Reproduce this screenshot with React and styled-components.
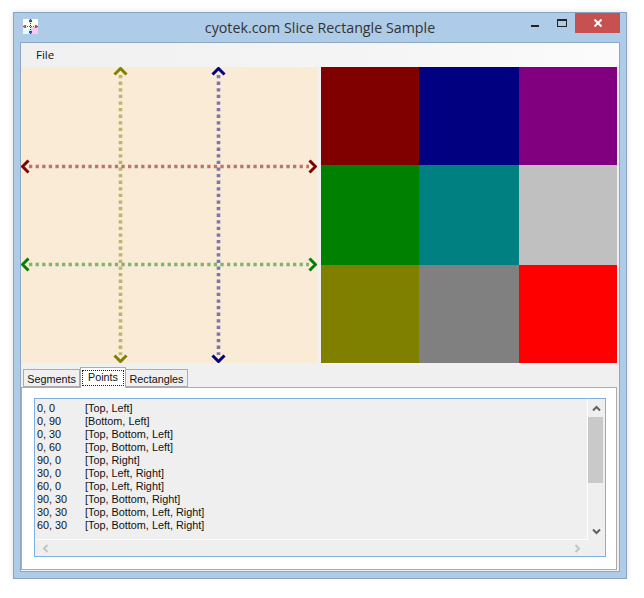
import React from 'react';
import styled, { createGlobalStyle } from 'styled-components';

const GlobalStyle = createGlobalStyle`
  html, body { margin: 0; padding: 0; background: #fff; }
  body { font-family: 'Open Sans', 'Liberation Sans', sans-serif; }
`;

const Window = styled.div`
  box-sizing: border-box;
  width: 614px;
  height: 567px;
  margin: 12px 0 0 13px;
  background: #aecbe8;
  border: 1px solid #8aa5c2;
  box-shadow: 0 0 6px rgba(0, 0, 0, 0.12);
  display: flex;
  flex-direction: column;
`;

const Caption = styled.div`
  height: 29px;
  padding: 0 6px;
  display: grid;
  grid-template-columns: 1fr auto 1fr;
  align-items: start;
`;

const AppIcon = styled.svg`
  display: block;
  width: 15px;
  height: 15px;
  margin: 6px 0 0 3px;
`;

const Title = styled.div`
  font-size: 14.25px;
  line-height: 29px;
  color: #333;
`;

const Controls = styled.div`
  display: flex;
  justify-content: flex-end;
`;

const ControlButton = styled.div`
  width: ${(props) => props.$width}px;
  height: 20px;
  display: flex;
  align-items: center;
  justify-content: center;
  background: ${(props) => props.$bg || 'transparent'};
`;

const Client = styled.div`
  flex: 1;
  margin: 0 6px 6px;
  background: #f0f0f0;
  border: 1px solid #8ca8c6;
  display: flex;
  flex-direction: column;
`;

const MenuBar = styled.div`
  box-sizing: border-box;
  height: 24px;
  padding: 0 0 2px 15px;
  display: flex;
  align-items: center;
  font-size: 11.5px;
  color: #111;
  background: linear-gradient(90deg, #f0f0f0 0%, #f5f5f5 60%, #fbfbfb 100%);
`;

const Stage = styled.div`
  display: flex;
  gap: 4px;
  height: 296px;
`;

const Canvas = styled.svg`
  display: block;
  width: 296px;
  height: 296px;
  background: #faebd7;
`;

const ColorGrid = styled.div`
  width: 296px;
  display: grid;
  grid-template-columns: 98px 100px 98px;
  grid-template-rows: 98px 100px 98px;
`;

const Cell = styled.div`
  background: ${(props) => props.$color};
`;

const TabStrip = styled.div`
  height: 20px;
  margin-top: 4px;
  padding-left: 2px;
  display: flex;
  align-items: flex-end;
  font-family: 'Liberation Sans', Arial, sans-serif;
`;

const Tab = styled.div`
  box-sizing: border-box;
  height: ${(props) => (props.$active ? 21 : 18)}px;
  width: ${(props) => props.$width}px;
  margin-bottom: ${(props) => (props.$active ? -1 : 0)}px;
  position: relative;
  z-index: ${(props) => (props.$active ? 1 : 0)};
  border: 1px solid #acacac;
  border-bottom: ${(props) => (props.$active ? 'none' : '1px solid #acacac')};
  border-left-width: ${(props) => (props.$first || props.$active ? 1 : 0)}px;
  background: ${(props) => (props.$active ? '#fff' : '#f0f0f0')};
  color: #111;
  font-size: 10.8px;
  display: flex;
  align-items: ${(props) => (props.$active ? 'flex-start' : 'center')};
  justify-content: center;
  padding-top: ${(props) => (props.$active ? 2 : 1)}px;
`;

const FocusLabel = styled.span`
  display: block;
  box-sizing: border-box;
  width: 100%;
  margin: 0 1px;
  height: 16px;
  line-height: 14px;
  text-align: center;
  outline: 1px dotted #222;
  outline-offset: -1px;
`;

const TabPanel = styled.div`
  box-sizing: border-box;
  width: 596px;
  height: 183px;
  padding: 10px 10px 12px 12px;
  background: #fff;
  border: 1px solid #acacac;
`;

const ListFrame = styled.div`
  box-sizing: border-box;
  height: 159px;
  border: 1px solid #7fb0e2;
  background: #efefef;
  display: grid;
  grid-template-columns: 1fr 17px;
  grid-template-rows: 1fr 16px;
`;

const ListBody = styled.div`
  padding: 3px 0 0 2px;
  border-right: 1px solid #fff;
  border-bottom: 1px solid #fff;
  font-family: 'Liberation Sans', Arial, sans-serif;
  font-size: 10.85px;
  line-height: 13px;
  color: #111;
`;

const ListRow = styled.div`
  display: flex;
`;

const Coord = styled.span`
  width: 48px;
`;

const VScroll = styled.div`
  display: grid;
  grid-template-rows: 18px 66px 1fr 18px;
  justify-items: center;
  align-items: center;
`;

const Thumb = styled.div`
  width: 15px;
  height: 66px;
  background: #c9c9c9;
  justify-self: start;
`;

const HScroll = styled.div`
  grid-column: 1 / 3;
  display: flex;
  align-items: center;
  justify-content: space-between;
  padding: 0 24px 0 7px;
`;

const Arrow = styled.svg`
  display: block;
  width: ${(props) => props.$w}px;
  height: ${(props) => props.$h}px;
`;

const rows = [
  ['0, 0', '[Top, Left]'],
  ['0, 90', '[Bottom, Left]'],
  ['0, 30', '[Top, Bottom, Left]'],
  ['0, 60', '[Top, Bottom, Left]'],
  ['90, 0', '[Top, Right]'],
  ['30, 0', '[Top, Left, Right]'],
  ['60, 0', '[Top, Left, Right]'],
  ['90, 30', '[Top, Bottom, Right]'],
  ['30, 30', '[Top, Bottom, Left, Right]'],
  ['60, 30', '[Top, Bottom, Left, Right]'],
];

const colors = ['#800000', '#000080', '#800080', '#008000', '#008080', '#c0c0c0', '#808000', '#808080', '#ff0000'];

const VGuide = ({ x, color }) => (
  <g fill="none" stroke={color} strokeWidth="3">
    <line x1={x} y1="8" x2={x} y2="288" strokeWidth="3.6" strokeDasharray="3.3 3.3" opacity="0.5" />
    <polyline points={`${x - 6},7.5 ${x},1.5 ${x + 6},7.5`} />
    <polyline points={`${x - 6},288.5 ${x},294.5 ${x + 6},288.5`} />
  </g>
);

const HGuide = ({ y, color }) => (
  <g fill="none" stroke={color} strokeWidth="3">
    <line x1="8" y1={y} x2="288" y2={y} strokeWidth="3.6" strokeDasharray="3.3 3.3" opacity="0.5" />
    <polyline points={`7.5,${y - 6} 1.5,${y} 7.5,${y + 6}`} />
    <polyline points={`288.5,${y - 6} 294.5,${y} 288.5,${y + 6}`} />
  </g>
);

const App = () => (
  <>
    <GlobalStyle />
    <Window>
      <Caption>
        <AppIcon viewBox="0 0 15 15">
          <rect width="15" height="15" fill="#fffff0" />
          <rect y="8" width="8" height="7" fill="#e0ffff" />
          <rect x="8" y="8" width="7" height="7" fill="#fbc8f0" />
          <line x1="7.5" y1="0" x2="7.5" y2="15" stroke="#2020e0" strokeDasharray="1 1" />
          <line x1="0" y1="7.5" x2="15" y2="7.5" stroke="#e02040" strokeDasharray="1 1" />
          <path d="M6 1l3 2M9 1l-3 2M6 12l3 2M9 12l-3 2" stroke="#2020e0" />
          <path d="M1 6l2 3M3 6l-2 3M12 6l2 3M14 6l-2 3" stroke="#e02040" />
        </AppIcon>
        <Title>cyotek.com Slice Rectangle Sample</Title>
        <Controls>
          <ControlButton $width={27}>
            <svg width="9" height="20" viewBox="0 0 9 20">
              <rect y="12" width="8" height="2" fill="#222" />
            </svg>
          </ControlButton>
          <ControlButton $width={26}>
            <svg width="10" height="20" viewBox="0 0 10 20">
              <rect x="0.5" y="6.5" width="9" height="7" fill="none" stroke="#222" />
              <rect y="6" width="10" height="2" fill="#222" />
            </svg>
          </ControlButton>
          <ControlButton $width={45} $bg="#c75050">
            <svg width="8" height="8" viewBox="0 0 8 8">
              <path d="M0.5 0.5L7.5 7.5M7.5 0.5L0.5 7.5" stroke="#fff" strokeWidth="2" />
            </svg>
          </ControlButton>
        </Controls>
      </Caption>
      <Client>
        <MenuBar>File</MenuBar>
        <Stage>
          <Canvas viewBox="0 0 296 296">
            <VGuide x={99.5} color="#808000" />
            <VGuide x={197.5} color="#000080" />
            <HGuide y={99.5} color="#800000" />
            <HGuide y={197.5} color="#008000" />
          </Canvas>
          <ColorGrid>
            {colors.map((color) => (
              <Cell key={color} $color={color} />
            ))}
          </ColorGrid>
        </Stage>
        <TabStrip>
          <Tab $width={57} $first>Segments</Tab>
          <Tab $width={46} $active><FocusLabel>Points</FocusLabel></Tab>
          <Tab $width={62}>Rectangles</Tab>
        </TabStrip>
        <TabPanel>
          <ListFrame>
            <ListBody>
              {rows.map(([coord, sides]) => (
                <ListRow key={coord}>
                  <Coord>{coord}</Coord>
                  <span>{sides}</span>
                </ListRow>
              ))}
            </ListBody>
            <VScroll>
              <Arrow $w={9} $h={7} viewBox="0 0 9 7">
                <path d="M1 5.5L4.5 2L8 5.5" fill="none" stroke="#606060" strokeWidth="2" />
              </Arrow>
              <Thumb />
              <span />
              <Arrow $w={9} $h={7} viewBox="0 0 9 7">
                <path d="M1 1.5L4.5 5L8 1.5" fill="none" stroke="#606060" strokeWidth="2" />
              </Arrow>
            </VScroll>
            <HScroll>
              <Arrow $w={7} $h={9} viewBox="0 0 7 9">
                <path d="M5.5 1L2 4.5L5.5 8" fill="none" stroke="#c4c4c4" strokeWidth="2" />
              </Arrow>
              <Arrow $w={7} $h={9} viewBox="0 0 7 9">
                <path d="M1.5 1L5 4.5L1.5 8" fill="none" stroke="#c4c4c4" strokeWidth="2" />
              </Arrow>
            </HScroll>
          </ListFrame>
        </TabPanel>
      </Client>
    </Window>
  </>
);

export default App;
